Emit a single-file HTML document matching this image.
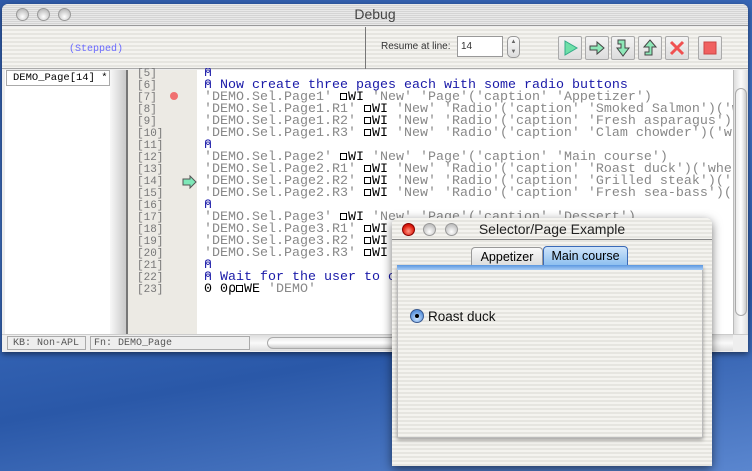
<!DOCTYPE html>
<html><head><meta charset="utf-8"><style>
*{margin:0;padding:0;box-sizing:border-box}
body{width:752px;height:471px;overflow:hidden;position:relative;background:linear-gradient(170deg,#2f5aa8 0%,#3e6fc0 40%,#2a58a8 70%,#5a86cf 100%);font-family:"Liberation Sans",sans-serif}
.abs{position:absolute}
.stripe{background:repeating-linear-gradient(#f4f3ef 0 2px,#e6e5e0 2px 4px)}
.win{left:2px;top:4px;width:746px;height:348px;border-radius:6px 6px 0 0;background:#eee;box-shadow:0 2px 6px rgba(0,0,0,.5);overflow:hidden}
.title{left:0;top:0;width:746px;height:22px;background:repeating-linear-gradient(#e8e8e8 0 1px,#d4d4d4 1px 2px);border-bottom:1px solid #999;font-size:14px;color:#444;text-align:center;line-height:21px}
.tl{width:13px;height:13px;border-radius:50%;background:radial-gradient(circle at 50% 70%,#fff,#ccc 60%,#aaa);border:1px solid #999;top:4px}
.code{font-family:"Liberation Mono","DejaVu Sans Mono",monospace;font-size:13.33px;line-height:12px;white-space:pre}
.c{color:#1a1aa8}.s{color:#888}.k{color:#000}
.q{display:inline-block;width:7px;height:7px;border:1.5px solid #000;margin-right:1px;color:transparent;overflow:hidden;font-size:1px;vertical-align:0}
.btn{top:32px;width:24px;height:24px;border:1px solid #aaa;background:linear-gradient(#f4f4f4,#dcdcdc);border-radius:2px}
</style></head><body>
<div class="abs win">
 <div class="abs title">Debug</div>
 <div class="abs tl" style="left:14px"></div><div class="abs tl" style="left:35px"></div><div class="abs tl" style="left:56px"></div>
 <div class="abs stripe" style="left:0;top:23px;width:746px;height:42px;border-bottom:1px solid #aaa"></div>
 <div class="abs" style="left:363px;top:23px;width:1px;height:42px;background:#777"></div>
 <div class="abs" style="left:67px;top:40px;font-size:10px;color:#6a6aff;font-family:'Liberation Mono',monospace">(Stepped)</div>
 <div class="abs" style="left:379px;top:37px;font-size:10px;color:#333">Resume at line:</div>
 <div class="abs" style="left:455px;top:32px;width:46px;height:21px;background:#fff;border:1px solid #999;font-size:10px;line-height:20px;padding-left:3px;color:#333">14</div>
 <div class="abs" style="left:505px;top:32px;width:13px;height:22px;border:1px solid #999;border-radius:5px;background:linear-gradient(#fafafa,#ddd);font-size:6px;text-align:center;color:#666;line-height:10px">▲<br>▼</div>
 <div class="abs btn" style="left:556px"><svg width="22" height="22"><path d="M6 4 L18 11 L6 18Z" fill="#6ee0a8" stroke="#3a8" /></svg></div>
 <div class="abs btn" style="left:583px"><svg width="22" height="22"><path d="M4 9h7v-4l7 6-7 6v-4H4z" fill="#8ee8b8" stroke="#444"/></svg></div>
 <div class="abs btn" style="left:609px"><svg width="22" height="22"><path d="M6 3h7v8h4l-6 8-6-8h4V7H6z" fill="#8ee8b8" stroke="#444"/></svg></div>
 <div class="abs btn" style="left:636px"><svg width="22" height="22"><path d="M11 3l6 7h-4v8H6v-3h4v-5H5z" fill="#8ee8b8" stroke="#444"/></svg></div>
 <div class="abs btn" style="left:663px"><svg width="22" height="22"><path d="M5 5L17 17M17 5L5 17" stroke="#f05050" stroke-width="3"/></svg></div>
 <div class="abs btn" style="left:696px"><svg width="22" height="22"><rect x="5" y="5" width="12" height="12" fill="#f06060" stroke="#c44"/></svg></div>
 <div class="abs" style="left:3px;top:66px;width:105px;height:264px;background:#fff"></div>
 <div class="abs" style="left:4px;top:66px;width:104px;height:16px;border:1px solid #aaa;background:#fff;font-size:10.5px;font-family:'Liberation Mono',monospace;line-height:14px;padding-left:6px">DEMO_Page[14] *</div>
 <div class="abs" style="left:108px;top:66px;width:15px;height:264px;background:linear-gradient(90deg,#f8f8f8,#ccc)"></div>
 <div class="abs" style="left:123px;top:66px;width:3px;height:264px;background:#777;border-left:1px solid #ccc"></div>
 <div class="abs" style="left:126px;top:66px;width:69px;height:264px;background:#eceae4"></div>
 <div class="abs" style="left:195px;top:66px;width:536px;height:264px;background:#fff"></div>
 <div class="abs code" style="left:135px;top:64px;color:#777;font-size:11px">[5]
[6]
[7]
[8]
[9]
[10]
[11]
[12]
[13]
[14]
[15]
[16]
[17]
[18]
[19]
[20]
[21]
[22]
[23]</div>
 <div class="abs" style="left:168px;top:88px;width:8px;height:8px;border-radius:50%;background:#f07070"></div>
 <svg class="abs" style="left:180px;top:171px" width="16" height="14"><path d="M1 4h7V1l6 6-6 6V10H1z" fill="#7ee8b8" stroke="#555"/></svg>
 <div class="abs" style="left:202px;top:64px;width:529px;height:264px;overflow:hidden"><div class="code"><span class="c">⍝</span>
<span class="c">⍝ Now create three pages each with some radio buttons</span>
<span class="s">'DEMO.Sel.Page1'</span> <span class="q">⎕</span><span class="k">WI</span> <span class="s">'New' 'Page'('caption' 'Appetizer')</span>
<span class="s">'DEMO.Sel.Page1.R1'</span> <span class="q">⎕</span><span class="k">WI</span> <span class="s">'New' 'Radio'('caption' 'Smoked Salmon')('w</span>
<span class="s">'DEMO.Sel.Page1.R2'</span> <span class="q">⎕</span><span class="k">WI</span> <span class="s">'New' 'Radio'('caption' 'Fresh asparagus')(</span>
<span class="s">'DEMO.Sel.Page1.R3'</span> <span class="q">⎕</span><span class="k">WI</span> <span class="s">'New' 'Radio'('caption' 'Clam chowder')('w</span>
<span class="c">⍝</span>
<span class="s">'DEMO.Sel.Page2'</span> <span class="q">⎕</span><span class="k">WI</span> <span class="s">'New' 'Page'('caption' 'Main course')</span>
<span class="s">'DEMO.Sel.Page2.R1'</span> <span class="q">⎕</span><span class="k">WI</span> <span class="s">'New' 'Radio'('caption' 'Roast duck')('whe</span>
<span class="s">'DEMO.Sel.Page2.R2'</span> <span class="q">⎕</span><span class="k">WI</span> <span class="s">'New' 'Radio'('caption' 'Grilled steak')('</span>
<span class="s">'DEMO.Sel.Page2.R3'</span> <span class="q">⎕</span><span class="k">WI</span> <span class="s">'New' 'Radio'('caption' 'Fresh sea-bass')(</span>
<span class="c">⍝</span>
<span class="s">'DEMO.Sel.Page3'</span> <span class="q">⎕</span><span class="k">WI</span> <span class="s">'New' 'Page'('caption' 'Dessert')</span>
<span class="s">'DEMO.Sel.Page3.R1'</span> <span class="q">⎕</span><span class="k">WI</span> <span class="s">'New' 'Radio'('caption' 'Fresh berries</span>
<span class="s">'DEMO.Sel.Page3.R2'</span> <span class="q">⎕</span><span class="k">WI</span> <span class="s">'New' 'Radio'('caption' 'Ice cream')('</span>
<span class="s">'DEMO.Sel.Page3.R3'</span> <span class="q">⎕</span><span class="k">WI</span> <span class="s">'New' 'Radio'('caption' 'Cheese')('w</span>
<span class="c">⍝</span>
<span class="c">⍝ Wait for the user to choose</span>
<span class="k">0 0⍴</span><span class="q">⎕</span><span class="k">WE</span> <span class="s">'DEMO'</span></div></div>
 <div class="abs" style="left:731px;top:66px;width:15px;height:264px;background:linear-gradient(90deg,#ddd,#fafafa,#ddd);border-left:1px solid #bbb"></div>
 <div class="abs" style="left:733px;top:84px;width:12px;height:228px;border-radius:6px;background:linear-gradient(90deg,#eee,#fff,#ccc);border:1px solid #aaa"></div>
 <div class="abs" style="left:0;top:330px;width:746px;height:18px;background:#eee;border-top:1px solid #ccc"></div>
 <div class="abs" style="left:5px;top:332px;width:79px;height:14px;border:1px solid #aaa;font-size:10px;font-family:'Liberation Mono',monospace;color:#555;line-height:13px;padding-left:5px">KB: Non-APL</div>
 <div class="abs" style="left:88px;top:332px;width:160px;height:14px;border:1px solid #aaa;font-size:10px;font-family:'Liberation Mono',monospace;color:#555;line-height:13px;padding-left:3px">Fn: DEMO_Page</div>
 <div class="abs" style="left:248px;top:331px;width:483px;height:16px;background:linear-gradient(#ddd,#fafafa,#ddd)"></div>
 <div class="abs" style="left:265px;top:333px;width:300px;height:12px;border-radius:6px;border:1px solid #aaa;background:linear-gradient(#eee,#fff,#ccc)"></div>
</div>
<div class="abs stripe" style="left:392px;top:218px;width:320px;height:248px;border-radius:6px 6px 0 0;box-shadow:0 3px 10px rgba(0,0,0,.55)">
 <div class="abs" style="left:0;top:0;width:320px;height:22px;border-bottom:1px solid #888;font-size:14px;text-align:center;line-height:22px;color:#222">Selector/Page Example</div>
 <div class="abs" style="left:10px;top:5px;width:13px;height:13px;border-radius:50%;background:radial-gradient(circle at 50% 65%,#ff9a8a,#e02010 60%,#a00);border:1px solid #800"></div>
 <div class="abs tl" style="left:31px;top:5px"></div><div class="abs tl" style="left:53px;top:5px"></div>
 <div class="abs" style="left:5px;top:47px;width:306px;height:173px;border:1px solid #bbb;box-shadow:0 2px 4px rgba(0,0,0,.35)"></div>
 <div class="abs" style="left:5px;top:47px;width:306px;height:5px;background:linear-gradient(#5b97e0,#a8ccf4)"></div>
 <div class="abs" style="left:79px;top:29px;width:72px;height:18px;border:1px solid #999;border-bottom:none;border-radius:4px 4px 0 0;background:linear-gradient(#fafafa,#ddd);font-size:12.5px;text-align:center;line-height:18px">Appetizer</div>
 <div class="abs" style="left:151px;top:28px;width:85px;height:19px;border:1px solid #3a6ab8;border-bottom:none;border-radius:4px 4px 0 0;background:linear-gradient(#cfe4fa,#8ec0f0);font-size:12.5px;text-align:center;line-height:19px">Main course</div>
 <div class="abs" style="left:18px;top:91px;width:14px;height:14px;border-radius:50%;background:radial-gradient(circle at 50% 70%,#cfe6ff,#5b93dc 70%);border:1px solid #3a5a90"></div>
 <div class="abs" style="left:23px;top:96px;width:4px;height:4px;border-radius:50%;background:#000"></div>
 <div class="abs" style="left:36px;top:91px;font-size:13.5px;color:#111">Roast duck</div>
</div>
</body></html>
